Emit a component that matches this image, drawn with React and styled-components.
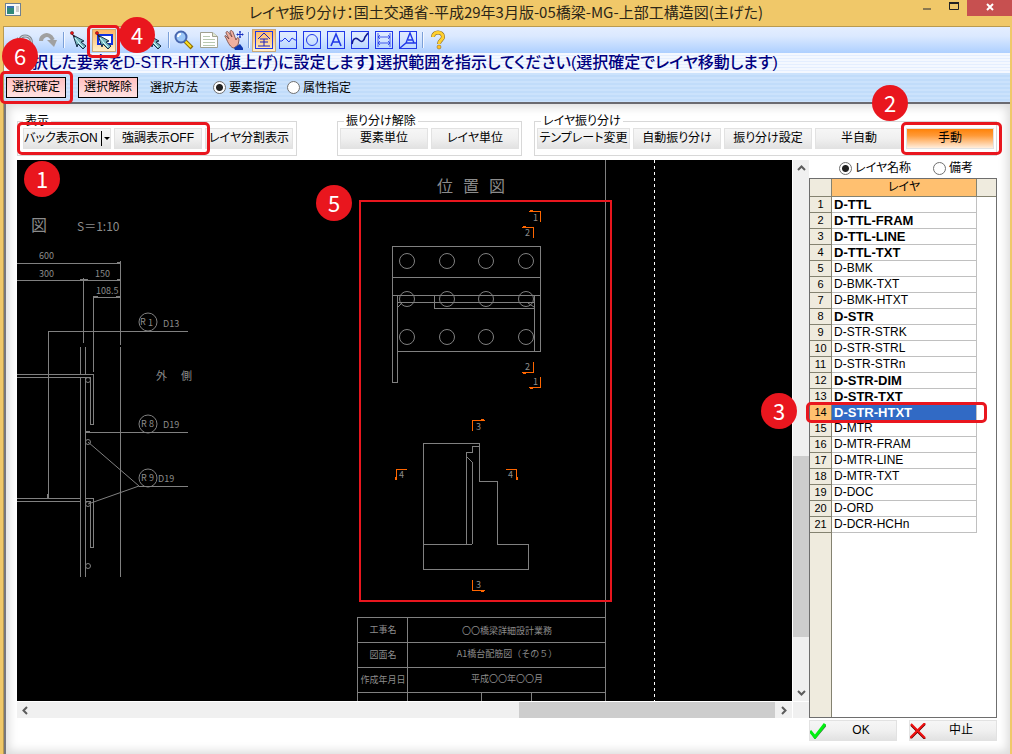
import React, { useState } from "react";
import styled, { createGlobalStyle, css } from "styled-components";

const GlobalStyle = createGlobalStyle`
  *, *::before, *::after { box-sizing: border-box; }
  body {
    margin: 0;
    background: #f0c869;
    color: #000;
    font: 12px/14px "Liberation Sans", "Noto Sans CJK JP", sans-serif;
    font-feature-settings: "palt";
  }
  button, input { font: inherit; font-feature-settings: inherit; color: inherit; margin: 0; }
`;

const RED = "#e9161e";

const Window = styled.div`
  display: flex;
  flex-direction: column;
  min-height: 100vh;
  background: #f0c869;
`;

const TitleBar = styled.header`
  display: grid;
  grid-template-columns: 1fr auto 1fr;
  align-items: start;
  height: 26px;
`;

const AppIcon = styled.svg`
  margin: 3px 0 0 5px;
`;

const Title = styled.h1`
  margin: 0;
  font: 15px/24px "Noto Sans CJK JP", sans-serif;
  font-feature-settings: "palt";
  white-space: nowrap;
  color: #2c2618;
`;

const WindowButtons = styled.div`
  display: flex;
  justify-content: flex-end;
`;

const WindowButton = styled.button`
  display: grid;
  place-items: center;
  width: ${(p) => (p.$close ? 45 : 27)}px;
  height: 16px;
  padding: 0;
  border: 0;
  background: ${(p) => (p.$close ? "#c75050" : "transparent")};
`;

const Client = styled.div`
  flex: 1;
  display: flex;
  flex-direction: column;
  margin: 0 2px 0 3px;
  border-left: 1px solid #b99a50;
`;

const Toolbar = styled.div`
  display: flex;
  align-items: center;
  gap: 2px;
  height: 27px;
  padding-left: 9px;
  border-top: 1px solid #b99a50;
  background: linear-gradient(#e4eeff, #dbe9ff 35%, #aed0ff);
`;

const ToolGroup = styled.div`
  display: flex;
  gap: ${(p) => p.$gap || 0}px;
`;

const Divider = styled.span`
  width: 2px;
  height: 16px;
  background: linear-gradient(to right, #7ba0d8 1px, #f4f8ff 1px);
`;

const ToolButton = styled.button`
  position: relative;
  display: grid;
  place-items: center;
  width: 24px;
  height: 23px;
  padding: 0;
  border: 1px solid transparent;
  background: transparent;
  ${(p) =>
    p.$active &&
    css`
      border-color: #c8a878;
      background: linear-gradient(#ffb765, #ffd79a 60%, #fff0c8);
    `}
`;

const Message = styled.p`
  margin: 0;
  height: 20px;
  padding-left: 4px;
  font-size: 16px;
  line-height: 19px;
  font-weight: 500;
  white-space: nowrap;
  color: #000080;
  background: repeating-linear-gradient(#f4f8ff 0 2px, #e4eeff 2px 3px);
`;

const Options = styled.div`
  display: flex;
  align-items: center;
  height: 29px;
  padding-left: 2px;
  gap: 12px;
  background: repeating-linear-gradient(#cbe2fc 0 2px, #c1dcfa 2px 4px);
`;

const PinkButton = styled.button`
  position: relative;
  width: 60px;
  height: 21px;
  padding: 0;
  border: 1px solid #000;
  line-height: 17px;
  background: linear-gradient(#ffc0c0, #ffe2e2);
`;

const RadioSet = styled.div`
  display: flex;
  align-items: center;
  gap: ${(p) => p.$gap}px;
  padding-left: 3px;
`;

const RadioLabel = styled.label`
  display: flex;
  align-items: center;
  gap: 3px;
  white-space: nowrap;
`;

const RadioInput = styled.input`
  appearance: none;
  width: 13px;
  height: 13px;
  border: 1px solid #707070;
  border-radius: 50%;
  background: #fff;
  &:checked {
    background: radial-gradient(circle, #222 3px, #fff 4px);
  }
`;

const Main = styled.main`
  flex: 1;
  display: flex;
  flex-direction: column;
  gap: 4px;
  padding: 10px 13px 13px 11px;
  border-top: 2px solid #6a6a70;
  border-left: 2px solid #77777c;
  background: #fff;
  box-shadow: inset 0 0 10px 3px #dcdcdc;
`;

const Groups = styled.div`
  display: flex;
  gap: 12px;
`;

const Group = styled.fieldset`
  position: relative;
  display: flex;
  gap: 3px;
  min-width: 0;
  margin: 0 ${(p) => p.$after || 0}px 0 0;
  padding: 0 ${(p) => (p.$wide ? "3px 6px 5px" : "2px 6px 2px")};
  border: 1px solid #d8d8d8;
`;

const Legend = styled.legend`
  height: 14px;
  margin-left: ${(p) => (p.$inset ? 0 : 4)}px;
  padding: 0 2px;
  line-height: 14px;
`;

const FlatButton = styled.button`
  position: relative;
  display: flex;
  align-items: center;
  justify-content: center;
  width: ${(p) => (p.$wide ? 93 : 88)}px;
  height: 21px;
  padding: 0;
  border: 1px solid #e2e2e2;
  white-space: nowrap;
  line-height: 19px;
  background: linear-gradient(#f6f6f6, #f0f0f0 50%, #e2e2e2);
  ${(p) =>
    p.$active &&
    css`
      background: linear-gradient(#ff8208, #ff9a38 35%, #ffeede);
    `}
`;

const Split = styled.span`
  display: flex;
  align-items: center;
  height: 15px;
  margin-left: 3px;
  border-left: 1px solid #000;
  padding-left: 2px;
`;

const Workspace = styled.div`
  flex: 1;
  display: grid;
  grid-template-columns: minmax(0, 1fr) 188px;
  grid-template-rows: 1fr 21px;
  row-gap: 2px;
`;

const Viewer = styled.section`
  display: grid;
  grid-template-columns: minmax(0, 1fr) 16px;
  grid-template-rows: minmax(480px, 1fr) 16px;
  gap: 1px;
`;

const Canvas = styled.div`
  position: relative;
  background: #000;
`;

const Drawing = styled.svg`
  position: absolute;
  inset: 0;
  width: 100%;
  height: 100%;
  fill: none;
  stroke: #808080;
  text {
    fill: #8c8c8c;
    stroke: none;
    font-family: "Noto Sans CJK JP", sans-serif;
    font-size: 9px;
    font-feature-settings: normal;
  }
  .mark { stroke: #ff6600; }
  .large { font-size: 16px; }
  .medium { font-size: 12px; }
  .small { font-size: 11px; }
  .cell { text-anchor: middle; }
`;

const Scroll = styled.div`
  display: flex;
  flex-direction: ${(p) => (p.$vertical ? "column" : "row")};
  background: #f0f0f0;
`;

const ScrollButton = styled.button`
  display: grid;
  place-items: center;
  flex: 0 0 17px;
  padding: 0;
  border: 0;
  background: transparent;
  svg { transform: rotate(${(p) => p.$turn}deg); }
`;

const ScrollPart = styled.div`
  flex: ${(p) => p.$size} 1 0;
  background: ${(p) => (p.$thumb ? "#cdcdcd" : "transparent")};
`;

const Corner = styled.div`
  background: #f0f0f0;
`;

const Side = styled.aside`
  display: flex;
  flex-direction: column;
`;

const NameChoice = styled.div`
  height: 18px;
  padding: 0 0 2px 27px;
  display: flex;
  align-items: center;
`;

const LayerPanel = styled.div`
  flex: 1;
  border: 1px solid #6e6e6e;
  background: linear-gradient(to right, #efebde 21px, #848270 21px 22px, #fff 22px);
`;

const LayerTable = styled.table`
  width: 100%;
  table-layout: fixed;
  border-collapse: separate;
  border-spacing: 0;
`;

const NumberCol = styled.col`
  width: 22px;
`;

const NameCol = styled.col`
  width: 145px;
`;

const HeadCell = styled.th`
  height: 18px;
  padding: 0;
  font-weight: 400;
  line-height: 17px;
  border-bottom: 1px solid #848270;
  border-right: ${(p) => (p.$last ? 0 : 1)}px solid #848270;
  background: ${(p) => (p.$name ? "#ffc070" : "#efebde")};
`;

const NumberCell = styled.th`
  height: 16px;
  padding: 0;
  font: 11px/15px "Liberation Sans", sans-serif;
  border-bottom: 1px solid #848270;
  border-right: 1px solid #848270;
  background: ${(p) => (p.$active ? "#ffc070" : "#efebde")};
`;

const NameCell = styled.td`
  position: relative;
  height: 16px;
  padding: 0 0 0 2px;
  line-height: 15px;
  white-space: nowrap;
  font-size: ${(p) => (p.$bold ? 13 : 12)}px;
  font-weight: ${(p) => (p.$bold ? 700 : 400)};
  border-bottom: 1px solid #c0c0c0;
  border-right: 1px solid #c0c0c0;
  color: ${(p) => (p.$active ? "#fff" : "#000")};
  background: ${(p) => (p.$active ? "#316ac5" : "#fff")};
`;

const Actions = styled.div`
  grid-column: 2;
  display: flex;
  justify-content: space-between;
`;

const ActionText = styled.span`
  flex: 1;
`;

/* Call-out frames and numbers lie over the control that they explain. */
const Frame = styled.span`
  position: absolute;
  z-index: 3;
  left: ${(p) => p.$left}px;
  top: ${(p) => p.$top}px;
  width: ${(p) => p.$width}px;
  height: ${(p) => p.$height}px;
  border: ${(p) => (p.$thin ? 2 : 3)}px solid ${RED};
  border-radius: ${(p) => (p.$thin ? 0 : 5)}px;
  pointer-events: none;
`;

const Badge = styled.span`
  position: absolute;
  z-index: 4;
  left: ${(p) => p.$left}px;
  top: ${(p) => p.$top}px;
  width: 36px;
  height: 36px;
  border-radius: 50%;
  background: ${RED};
  color: #fff;
  font: 22px/34px "Noto Sans CJK JP", sans-serif;
  text-align: center;
  pointer-events: none;
`;

const Icon = ({ children, size = 20 }) => (
  <svg width={size} height={size} viewBox="0 0 20 20" fill="none" aria-hidden="true">
    {children}
  </svg>
);

const Undo = () => (
  <Icon>
    <path d="M15 17c3-5 1-11-5-11-2 0-4 1-5 3" stroke="#808890" strokeWidth="3" />
    <path d="M15 17c3-5 1-11-5-11-2 0-4 1-5 3" stroke="#d8dde2" strokeWidth="1" />
    <path d="M2 7v8h8z" fill="#909090" />
  </Icon>
);

const Redo = () => (
  <Icon>
    <path d="M2 11c0-5 6-8 10-4l2 3" stroke="#a0a0a0" strokeWidth="4" />
    <path d="M8 10h10l-3 7z" fill="#a0a0a0" />
  </Icon>
);

const Pointer = ({ box }) => (
  <Icon>
    {box && <path d="M4 5h14v9H4z" fill="#fff" stroke="#1030e0" strokeWidth="2" />}
    <path d="M4 5l4 12 1-3 5 5 3-3-5-4 3-1z" fill="#78b8c0" stroke="#183048" />
    <path d="M6 8l5 6M9 12l5 5" stroke="#d8ffff" strokeWidth="1" />
    <path d="M3 4l3 3" stroke="#401010" strokeWidth="1" />
    <circle cx="3" cy="3" r="1.6" fill="#e81010" stroke="#601010" strokeWidth="0.5" />
  </Icon>
);

const Magnifier = () => (
  <Icon>
    <path d="M11 11l7 7" stroke="#907000" strokeWidth="4" />
    <path d="M11 11l6 6" stroke="#ffe020" strokeWidth="2" />
    <circle cx="7" cy="7" r="5.5" fill="#9cc8f8" stroke="#4868b0" strokeWidth="2" />
    <path d="M4 7c0-2 1-3 3-3" stroke="#fff" strokeWidth="2" />
  </Icon>
);

const Sheet = () => (
  <Icon>
    <path d="M1.500 2.500h12l5 4v11h-17z" fill="#fff" stroke="#a0a090" />
    <path d="M13.500 2.500v4h5" fill="#e0e8d0" stroke="#a0a090" />
    <path d="M4 6.500h7M4 9.500h12M4 12.500h12M4 15.500h12" stroke="#b8c8b0" />
  </Icon>
);

const Hand = () => (
  <Icon>
    <path d="M2 8C0 6 1 5 2 6l3 3-3-6c0-2 2-2 3 0l3 4-2-5c0-2 2-2 3 0l3 8 1-2c1-1 2 0 2 2l-1 5-4 3C7 18 4 13 2 8z" fill="#f0b0a0" stroke="#704038" strokeWidth="0.8" />
    <path d="M10 18l6-4 3 4v2h-8z" fill="#1038b0" />
    <path d="M16 1v7M12.500 4.500h7M15 2h2M15 7h2M13.500 3.500v2M18.500 3.500v2" stroke="#1830c0" />
  </Icon>
);

const Help = () => (
  <Icon>
    <path d="M5 7c0-6 10-6 10 0 0 3-4 3-4 7" stroke="#806020" strokeWidth="4" />
    <path d="M5 7c0-6 10-6 10 0 0 3-4 3-4 7" stroke="#ffd030" strokeWidth="3" />
    <circle cx="11" cy="17" r="2" fill="#ffc020" stroke="#806020" strokeWidth="0.5" />
  </Icon>
);

const BLUE = "#2038e8";
const filterGlyphs = {
  全: <path d="M4 9l6-6 6 6M6 9h8M6 12h8M4 16h12M10 9v7" stroke="#1820c0" />,
  折線: <path d="M2 11l2 0 3-3 4 4 3-4 3 2 2 0" stroke={BLUE} />,
  円: <circle cx="10" cy="10" r="5.5" stroke={BLUE} />,
  文字: <path d="M5 16l5-12 5 12M7 12h6" stroke={BLUE} strokeWidth="1.6" />,
  曲線: <path d="M2 14c1-6 4-7 7-4s5 1 6-3l3-4" stroke="#101890" strokeWidth="1.600" />,
  寸法: <path d="M4 3v14M16 3v14M4 7h12M4 13h12M6 5L4 7l2 2M14 5l2 2-2 2M6 11l-2 2 2 2M14 11l2 2-2 2" stroke={BLUE} strokeWidth="0.8" />,
  引出し: <path d="M8 13l4-10 4 10M10 10h5M2 18l6-5h10" stroke={BLUE} strokeWidth="1.4" />,
};

const FilterIcon = ({ name }) => (
  <Icon>
    <rect x="1.5" y="1.5" width="17" height="17" stroke={BLUE} />
    {filterGlyphs[name]}
  </Icon>
);

const Chevron = () => (
  <svg width="9" height="9" viewBox="0 0 9 9" fill="none" aria-hidden="true">
    <path d="M1 6l3.500-3.500L8 6" stroke="#5c5c5c" strokeWidth="2" />
  </svg>
);

const LAYERS = [
  ["D-TTL", true], ["D-TTL-FRAM", true], ["D-TTL-LINE", true], ["D-TTL-TXT", true],
  ["D-BMK"], ["D-BMK-TXT"], ["D-BMK-HTXT"], ["D-STR", true], ["D-STR-STRK"],
  ["D-STR-STRL"], ["D-STR-STRn"], ["D-STR-DIM", true], ["D-STR-TXT", true],
  ["D-STR-HTXT", true], ["D-MTR"], ["D-MTR-FRAM"], ["D-MTR-LINE"], ["D-MTR-TXT"],
  ["D-DOC"], ["D-ORD"], ["D-DCR-HCHn"],
];
const ACTIVE_LAYER = 13;

function Radios({ name, items, gap }) {
  const [value, setValue] = useState(items[0]);
  return (
    <RadioSet $gap={gap}>
      {items.map((item) => (
        <RadioLabel key={item}>
          <RadioInput type="radio" name={name} checked={value === item} onChange={() => setValue(item)} />
          {item}
        </RadioLabel>
      ))}
    </RadioSet>
  );
}

function BridgeDrawing() {
  return (
    <Drawing role="img" aria-label="上部工構造図">
      <g transform="translate(-17 -160)">
        <g shapeRendering="crispEdges">
          <path d="M17 263.500H120M17 280.500H120M93 297.500H120M120.500 261V345M120.500 347V577M83.500 278V343M93.500 296V372" />
          <path d="M80.500 347V374M85.500 347V374M80.500 378V577M85.500 378V577M17 374.500H93.500V424.500H90.500V377.500H17" />
          <path d="M48.500 498V331.500H188M85 432.500H188M139 486.500H188" />
          <path d="M17 498.500H80M17 501.500H80M85 498.500H93.500V547.500H90.500V501.500H85" />
          <path d="M605.500 160V701" />
          <path d="M654.500 160V701" stroke="#fff" strokeDasharray="3 3" />
          <path d="M392.500 295V246.500H540.500V351.500H397M392 277.500H540M392 295.500H540M397 302.500H534M434.500 295V308.500H534M534.500 295V351M392.500 295V382.500H397.500V295" />
          <path d="M423.500 443.500H479.500V481.500H497.500V544.500H528.500V569.500H423.500ZM423 544.500H472M466.500 544V452.500H472.500V446.500H479M472.500 544V462" />
          <path d="M357.500 701V617.500H605M357 642.500H605M357 667.500H605M357 692.500H605M407.500 617V701M481.500 692V701M531.500 692V701" />
          <path className="mark" d="M529 211.500H540.500V222M522 227.500H533.500V238M522 372.500H533.500V362M529 387.500H540.500V377M472.500 431V420.500H485M396.500 480V469.500H407M506 469.500H516.500V480M472.500 580V590.500H485" />
          <path className="mark" d="M530 210.500H533M523 226.500H526M523 373.500H526M530 388.500H533M481 419.500H484M395.500 477V480M517.500 477V480M481 591.500H484" />
        </g>
        <path d="M88 442L139 486L88 504M467 457L472 462M398 307L403 302M528 303L534 307" />
        {[380, 442, 504, 566].map((y) => (
          <circle key={y} cx="88" cy={y} r="2.500" />
        ))}
        {[322, 424, 478].map((y) => (
          <circle key={y} cx="148" cy={y} r="9" />
        ))}
        {[261, 299, 337].map((y) =>
          [407, 447, 486, 526].map((x) => <circle key={`${x}-${y}`} cx={x} cy={y} r="7.500" />)
        )}
        <path d="M117 263h3M80 280h8M117 280h3M94 297h4M116 297h4M86 432h4M48 494v4" strokeWidth="2" />
        <text className="large" x="31" y="231">図</text>
        <text className="medium" x="77" y="231">S＝1:10</text>
        <text x="39" y="259">600</text>
        <text x="39" y="277">300</text>
        <text x="95" y="277">150</text>
        <text x="96" y="294">108.5</text>
        <text x="140" y="325">R</text><text x="148" y="326">1</text><text x="163" y="327">D13</text>
        <text x="141" y="427">R</text><text x="149" y="427">8</text><text x="163" y="428">D19</text>
        <text x="141" y="481">R</text><text x="149" y="481">9</text><text x="158" y="482">D19</text>
        <text className="small" x="156" y="380">外</text>
        <text className="small" x="181" y="380">側</text>
        <text className="large" x="437" y="192">位</text>
        <text className="large" x="463" y="192">置</text>
        <text className="large" x="489" y="192">図</text>
        <text x="533" y="221">1</text><text x="525" y="236">2</text>
        <text x="525" y="370">2</text><text x="533" y="385">1</text>
        <text x="476" y="430">3</text><text x="399" y="478">4</text>
        <text x="508" y="478">4</text><text x="476" y="588">3</text>
        <text className="cell" x="383" y="633">工事名</text>
        <text className="cell" x="507" y="634">〇〇橋梁詳細設計業務</text>
        <text className="cell" x="383" y="658">図面名</text>
        <text className="cell" x="507" y="657">A1橋台配筋図（その５）</text>
        <text className="cell" x="383" y="683">作成年月日</text>
        <text className="cell" x="507" y="682">平成〇〇年〇〇月</text>
      </g>
    </Drawing>
  );
}

export default function App() {
  return (
    <>
      <GlobalStyle />
      <Window>
        <TitleBar>
          <AppIcon width="16" height="13" viewBox="0 0 16 13" aria-hidden="true">
            <rect x="0.500" y="0.500" width="15" height="12" fill="#f8f8f8" stroke="#708090" />
            <rect x="2" y="3" width="7" height="8" fill="#308878" />
            <path d="M2 3h7v2H2z" fill="#3870b0" />
            <path d="M11 4h3M11 6h3M11 8h3" stroke="#a0a0a0" />
          </AppIcon>
          <Title>レイヤ振り分け：国土交通省-平成29年3月版-05橋梁-MG-上部工構造図(主げた)</Title>
          <WindowButtons>
            <WindowButton aria-label="最小化">
              <svg width="8" height="12"><path d="M0 7h8" stroke="#8a7850" strokeWidth="2" /></svg>
            </WindowButton>
            <WindowButton aria-label="最大化">
              <svg width="10" height="12"><path d="M0.500 1v6.500h9V1" fill="none" stroke="#222" /><path d="M0 1h10" stroke="#222" strokeWidth="2" /></svg>
            </WindowButton>
            <WindowButton $close aria-label="閉じる">
              <svg width="8" height="12"><path d="M1 2l6 6M7 2l-6 6" stroke="#fff" strokeWidth="2" /></svg>
            </WindowButton>
          </WindowButtons>
        </TitleBar>

        <Client>
          <Toolbar role="toolbar">
            <ToolGroup>
              <ToolButton aria-label="元に戻す"><Undo /></ToolButton>
              <ToolButton aria-label="やり直し"><Redo /></ToolButton>
            </ToolGroup>
            <Divider />
            <ToolGroup $gap={1}>
              <ToolButton aria-label="選択"><Pointer /></ToolButton>
              <ToolButton $active aria-label="範囲選択">
                <Pointer box />
                <Frame $left={-6} $top={-5} $width={33} $height={33} />
                <Badge $left={26} $top={-13}>4</Badge>
              </ToolButton>
              <ToolButton aria-label="多角形選択"><Pointer /></ToolButton>
              <ToolButton aria-label="交差選択"><Pointer /></ToolButton>
            </ToolGroup>
            <Divider />
            <ToolGroup $gap={1}>
              <ToolButton aria-label="拡大"><Magnifier /></ToolButton>
              <ToolButton aria-label="全体表示"><Sheet /></ToolButton>
              <ToolButton aria-label="移動"><Hand /></ToolButton>
            </ToolGroup>
            <Divider />
            <ToolGroup>
              {Object.keys(filterGlyphs).map((name, i) => (
                <ToolButton key={name} $active={i === 0} aria-label={name}>
                  <FilterIcon name={name} />
                </ToolButton>
              ))}
            </ToolGroup>
            <Divider />
            <ToolButton aria-label="ヘルプ"><Help /></ToolButton>
          </Toolbar>

          <Message>【選択した要素をD-STR-HTXT(旗上げ)に設定します】選択範囲を指示してください(選択確定でレイヤ移動します)</Message>

          <Options>
            <PinkButton>
              選択確定
              <Frame $left={-7} $top={-7} $width={73} $height={33} />
              <Badge $left={-5} $top={-40}>6</Badge>
            </PinkButton>
            <PinkButton>選択解除</PinkButton>
            <span>選択方法</span>
            <Radios name="method" items={["要素指定", "属性指定"]} gap={10} />
          </Options>

          <Main>
            <Groups>
              <Group $wide $after={28}>
                <Legend $inset>表示</Legend>
                <FlatButton>
                  バック表示ON
                  <Split>
                    <svg width="6" height="3" aria-hidden="true"><path d="M0 0h6L3 3z" /></svg>
                  </Split>
                </FlatButton>
                <FlatButton>強調表示OFF</FlatButton>
                <FlatButton>レイヤ分割表示</FlatButton>
                <Frame $left={-1} $top={-6} $width={193} $height={33} />
                <Badge $left={6} $top={33}>1</Badge>
              </Group>
              <Group>
                <Legend>振り分け解除</Legend>
                <FlatButton>要素単位</FlatButton>
                <FlatButton>レイヤ単位</FlatButton>
              </Group>
              <Group>
                <Legend>レイヤ振り分け</Legend>
                <FlatButton $wide>テンプレート変更</FlatButton>
                <FlatButton>自動振り分け</FlatButton>
                <FlatButton>振り分け設定</FlatButton>
                <FlatButton>半自動</FlatButton>
                <FlatButton $active>
                  手動
                  <Frame $left={-6} $top={-7} $width={101} $height={33} />
                  <Badge $left={-35} $top={-44}>2</Badge>
                </FlatButton>
              </Group>
            </Groups>

            <Workspace>
              <Viewer>
                <Canvas>
                  <BridgeDrawing />
                  <Frame $thin $left={342} $top={40} $width={253} $height={402} />
                  <Badge $left={299} $top={25}>5</Badge>
                </Canvas>
                <Scroll $vertical>
                  <ScrollButton $turn={0} aria-label="上へ"><Chevron /></ScrollButton>
                  <ScrollPart $size={279} />
                  <ScrollPart $size={181} $thumb />
                  <ScrollPart $size={47} />
                  <ScrollButton $turn={180} aria-label="下へ"><Chevron /></ScrollButton>
                </Scroll>
                <Scroll>
                  <ScrollButton $turn={-90} aria-label="左へ"><Chevron /></ScrollButton>
                  <ScrollPart $size={485} />
                  <ScrollPart $size={256} $thumb />
                  <ScrollButton $turn={90} aria-label="右へ"><Chevron /></ScrollButton>
                </Scroll>
                <Corner />
              </Viewer>

              <Side>
                <NameChoice>
                  <Radios name="column" items={["レイヤ名称", "備考"]} gap={22} />
                </NameChoice>
                <LayerPanel>
                  <LayerTable>
                    <colgroup><NumberCol /><NameCol /><col /></colgroup>
                    <thead>
                      <tr><HeadCell /><HeadCell $name scope="col">レイヤ</HeadCell><HeadCell $last /></tr>
                    </thead>
                    <tbody>
                      {LAYERS.map(([name, bold], i) => (
                        <tr key={name}>
                          <NumberCell scope="row" $active={i === ACTIVE_LAYER}>{i + 1}</NumberCell>
                          <NameCell $bold={bold} $active={i === ACTIVE_LAYER}>
                            {name}
                            {i === ACTIVE_LAYER && (
                              <>
                                <Frame $left={-26} $top={-3} $width={181} $height={21} />
                                <Badge $left={-71} $top={-12}>3</Badge>
                              </>
                            )}
                          </NameCell>
                          <td />
                        </tr>
                      ))}
                    </tbody>
                  </LayerTable>
                </LayerPanel>
              </Side>

              <Actions>
                <FlatButton>
                  <svg width="16" height="16" viewBox="0 0 16 16" fill="none" aria-hidden="true">
                    <path d="M1 9l4 6L16 2" stroke="#506850" strokeWidth="2" />
                    <path d="M0 8l5 6L15 1" stroke="#00f010" strokeWidth="3" />
                  </svg>
                  <ActionText>OK</ActionText>
                </FlatButton>
                <FlatButton>
                  <svg width="16" height="16" viewBox="0 0 16 16" fill="none" aria-hidden="true">
                    <path d="M1 2l14 14M15 1L1 15" stroke="#600000" strokeWidth="2" />
                    <path d="M1 1l14 14M15 0L0 15" stroke="#f01010" strokeWidth="2" />
                  </svg>
                  <ActionText>中止</ActionText>
                </FlatButton>
              </Actions>
            </Workspace>
          </Main>
        </Client>
      </Window>
    </>
  );
}
